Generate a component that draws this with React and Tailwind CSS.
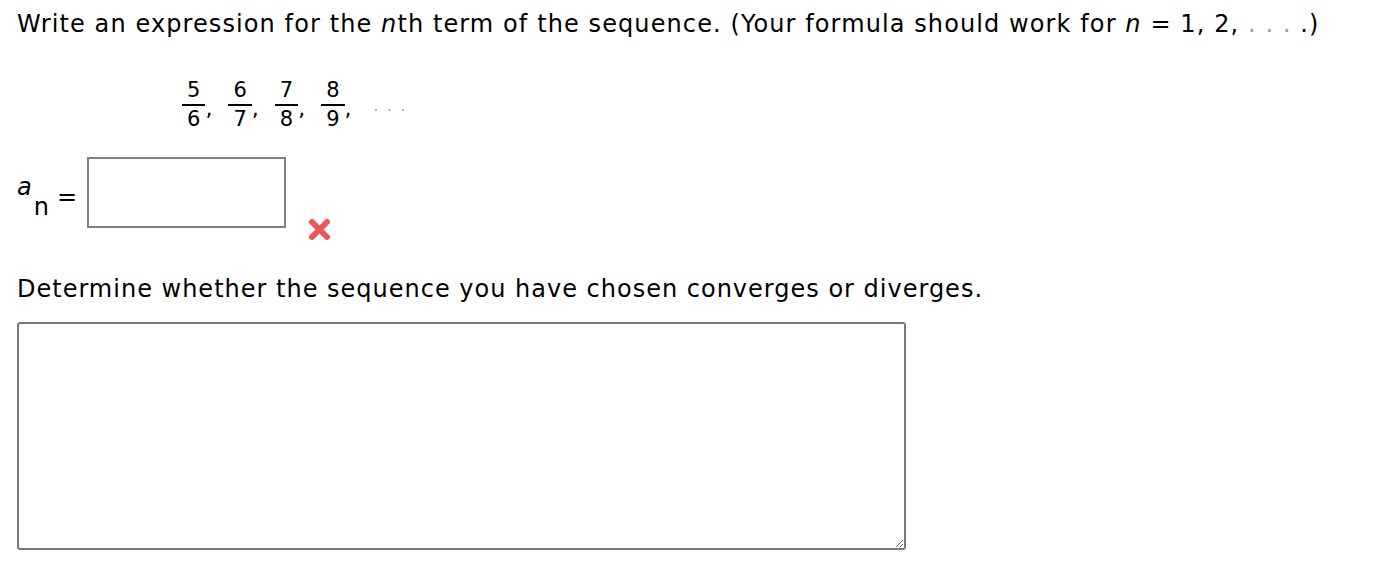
import React from 'react';

const Frac = ({ num, den }) => (
    <span className="flex flex-col items-center text-[21px]">
        <span className="px-[5px] leading-[19px]">{num}</span>
        <span className="w-full h-[2px] mt-[4px] bg-black" />
        <span className="px-[5px] mt-[4px] leading-[19px]">{den}</span>
    </span>
);

const App = () => {
    const terms = [[5, 6], [6, 7], [7, 8], [8, 9]];

    return (
        <div className="min-h-screen bg-white text-black px-[17px] pt-[10px] font-['DejaVu_Sans','Verdana',sans-serif] text-[24px] leading-[28px]">
            <p className="tracking-[1.1px]">
                Write an expression for the <i>n</i>th term of the sequence. (Your formula should work for <i>n</i> = 1, 2, <span className="text-gray-400">. . .</span> .)
            </p>

            {/* sequence */}
            <div className="flex items-start mt-[43px] ml-[165px]">
                {terms.map(([n, d]) => (
                    <div key={n} className="flex items-start">
                        <Frac num={n} den={d} />
                        <span className="w-[23px] text-[22px] leading-[22px] mt-[17px]">,</span>
                    </div>
                ))}
                <span className="ml-[6px] mt-[18px] text-[#999] text-[15px] leading-[15px] tracking-[2px]">. . .</span>
            </div>

            {/* answer row */}
            <div className="flex items-start h-[71px] mt-[28px]">
                <span className="italic mt-[16px]">a</span>
                <span className="ml-[2px] mt-[36px]">n</span>
                <span className="ml-[8px] mt-[26px]">=</span>
                <div className="ml-[10px] w-[199px] h-[71px] shrink-0 border-2 border-[#808080] bg-white" />
                <svg className="ml-[21px] mt-[60px] shrink-0" width="25" height="25" viewBox="0 0 25 25">
                    <path d="M5 5 L20 20 M20 5 L5 20" stroke="#e8595c" strokeWidth="6" strokeLinecap="round" />
                </svg>
            </div>

            <p className="mt-[47px] tracking-[1px]">
                Determine whether the sequence you have chosen converges or diverges.
            </p>

            <textarea className="block mt-[19px] w-[889px] h-[228px] border-2 border-[#7a7a7a] rounded-[3px] bg-white outline-none" />
        </div>
    );
};

export default App;
